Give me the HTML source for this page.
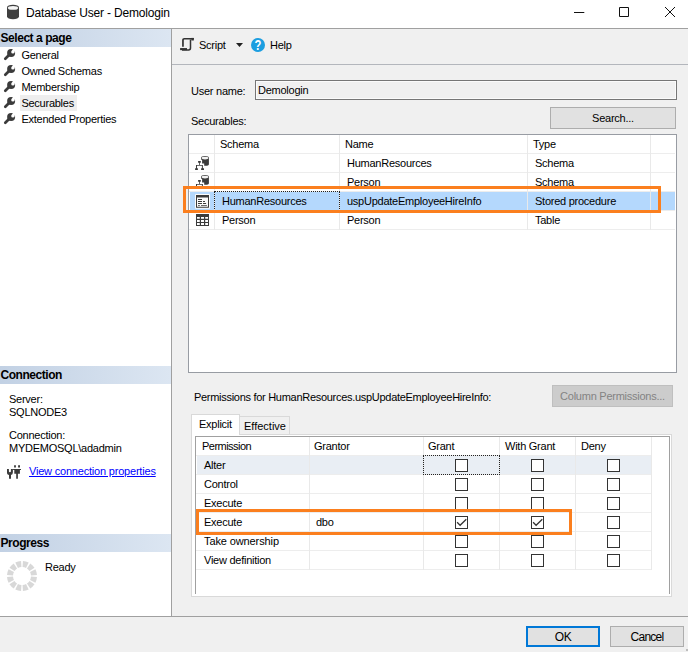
<!DOCTYPE html>
<html>
<head>
<meta charset="utf-8">
<title>Database User - Demologin</title>
<style>
html,body{margin:0;padding:0;}
body{width:688px;height:652px;position:relative;overflow:hidden;background:#f0f0f0;font-family:"Liberation Sans",sans-serif;font-size:11px;color:#000;letter-spacing:-0.25px;}
.a{position:absolute;white-space:nowrap;}
.t{position:absolute;white-space:nowrap;line-height:13px;height:13px;}
#titlebar{position:absolute;left:0;top:0;width:688px;height:28px;background:#fff;}
#title{left:26px;top:6px;font-size:12px;line-height:15px;letter-spacing:-0.17px;}
#topline{position:absolute;left:0;top:28px;width:688px;height:1px;background:#a0a0a0;}
#left{position:absolute;left:0;top:29px;width:171px;height:587px;background:#fff;}
.hdr{position:absolute;left:0;width:171px;height:18px;background:linear-gradient(to right,#c2d1e4,#dce6f2);font-weight:bold;font-size:12px;line-height:19px;letter-spacing:-0.45px;}
.hdr span{position:absolute;left:0.5px;top:0;}
.wr{position:absolute;left:4px;width:11px;height:11px;}
#vline{position:absolute;left:171px;top:29px;width:1px;height:587px;background:#a0a0a0;}
#tbline{position:absolute;left:172px;top:64px;width:516px;height:1px;background:#b3b6bc;}
#botline{position:absolute;left:0;top:616px;width:688px;height:1px;background:#a0a0a0;}
.btn{position:absolute;box-sizing:border-box;border:1px solid #adadad;background:#e1e1e1;text-align:center;line-height:19px;}
.grid{position:absolute;background:#fff;box-sizing:border-box;}
.hl{position:absolute;height:1px;background:#ededed;}
.vl{position:absolute;width:1px;background:#e9e9e9;}
.cb{position:absolute;width:13px;height:13px;box-sizing:border-box;border:1px solid #333;background:#fff;}
.or{position:absolute;box-sizing:border-box;border:3px solid #fb7f1e;}
</style>
</head>
<body>
<div id="titlebar">
<svg class="a" style="left:0px;top:0px" width="26" height="26" viewBox="0 0 26 26"><path d="M7 7.4 A6 2.6 0 0 1 19 7.4 V16.6 A6 2.6 0 0 1 7 16.6 Z" fill="#3f3f3f"/><ellipse cx="13" cy="7.9" rx="5.1" ry="1.85" fill="#f4f4f4"/></svg>
<div class="a" id="title">Database User - Demologin</div>
<svg class="a" style="left:570px;top:0" width="118" height="28" viewBox="0 0 118 28"><path d="M4 12.5 H14.3 M49.5 7.5 H58.5 V16.5 H49.5 Z M95 7 L105 17 M105 7 L95 17" stroke="#111" stroke-width="1" fill="none"/></svg>
</div>
<div id="topline"></div>
<div id="left">
<div class="hdr" style="top:0"><span>Select a page</span></div>
<div class="hdr" style="top:337px"><span>Connection</span></div>
<div class="hdr" style="top:505px"><span>Progress</span></div>
</div>
<div id="vline"></div>
<svg class="a" style="left:3px;top:48px" width="13" height="13" viewBox="0 0 13 13"><path d="M2.3 10.7 L7 6" stroke="#3b3b3b" stroke-width="2.7" stroke-linecap="round" fill="none"/><circle cx="8.1" cy="4.9" r="4" fill="#3b3b3b"/><circle cx="9.9" cy="3.9" r="1.7" fill="#fff"/><path d="M9.9 3.9 L12.1 -0.2" stroke="#fff" stroke-width="2.7" fill="none"/></svg>
<div class="t" style="left:21.4px;top:49px">General</div>
<svg class="a" style="left:3px;top:64px" width="13" height="13" viewBox="0 0 13 13"><path d="M2.3 10.7 L7 6" stroke="#3b3b3b" stroke-width="2.7" stroke-linecap="round" fill="none"/><circle cx="8.1" cy="4.9" r="4" fill="#3b3b3b"/><circle cx="9.9" cy="3.9" r="1.7" fill="#fff"/><path d="M9.9 3.9 L12.1 -0.2" stroke="#fff" stroke-width="2.7" fill="none"/></svg>
<div class="t" style="left:21.4px;top:65px">Owned Schemas</div>
<svg class="a" style="left:3px;top:80px" width="13" height="13" viewBox="0 0 13 13"><path d="M2.3 10.7 L7 6" stroke="#3b3b3b" stroke-width="2.7" stroke-linecap="round" fill="none"/><circle cx="8.1" cy="4.9" r="4" fill="#3b3b3b"/><circle cx="9.9" cy="3.9" r="1.7" fill="#fff"/><path d="M9.9 3.9 L12.1 -0.2" stroke="#fff" stroke-width="2.7" fill="none"/></svg>
<div class="t" style="left:21.4px;top:81px">Membership</div>
<svg class="a" style="left:3px;top:96px" width="13" height="13" viewBox="0 0 13 13"><path d="M2.3 10.7 L7 6" stroke="#3b3b3b" stroke-width="2.7" stroke-linecap="round" fill="none"/><circle cx="8.1" cy="4.9" r="4" fill="#3b3b3b"/><circle cx="9.9" cy="3.9" r="1.7" fill="#fff"/><path d="M9.9 3.9 L12.1 -0.2" stroke="#fff" stroke-width="2.7" fill="none"/></svg>
<div class="a" style="left:20px;top:95px;width:57px;height:16px;background:#eeeeee"></div>
<div class="t" style="left:21.4px;top:97px">Securables</div>
<svg class="a" style="left:3px;top:112px" width="13" height="13" viewBox="0 0 13 13"><path d="M2.3 10.7 L7 6" stroke="#3b3b3b" stroke-width="2.7" stroke-linecap="round" fill="none"/><circle cx="8.1" cy="4.9" r="4" fill="#3b3b3b"/><circle cx="9.9" cy="3.9" r="1.7" fill="#fff"/><path d="M9.9 3.9 L12.1 -0.2" stroke="#fff" stroke-width="2.7" fill="none"/></svg>
<div class="t" style="left:21.4px;top:113px">Extended Properties</div>
<div class="t" style="left:9px;top:393px">Server:</div>
<div class="t" style="left:9px;top:406px">SQLNODE3</div>
<div class="t" style="left:9px;top:429px">Connection:</div>
<div class="t" style="left:9px;top:442px">MYDEMOSQL\adadmin</div>
<svg class="a" style="left:7px;top:465px" width="15" height="15" viewBox="0 0 15 15"><path d="M-0.1 4 H1.9 V6.3 Q1.9 7.3 2.9 7.3 Q3.9 7.3 3.9 6.3 V4 H5.9 V7.2 Q5.9 9.6 4 10 V13.8 H2 V10 Q-0.1 9.6 -0.1 7.2 Z" fill="#3b3b3b"/><path d="M7.1 0.2 H8.9 V2.6 H7.1 Z M11.1 0.2 H13 V2.6 H11.1 Z M6.1 4.1 H14 V4.9 H12.9 V8.7 H10.9 V13.7 H9.2 V8.7 H7.3 V4.9 H6.1 Z" fill="#3b3b3b"/></svg>
<div class="t" style="left:29px;top:465px;color:#0000ff;text-decoration:underline;letter-spacing:-0.2px">View connection properties</div>
<svg class="a" style="left:7px;top:561px" width="30" height="30" viewBox="0 0 30 30"><path d="M29.97 15.92 A15 15 0 0 1 28.42 21.69 L23.05 19.02 A9 9 0 0 0 23.98 15.55 Z M27.51 23.28 A15 15 0 0 1 23.28 27.51 L19.97 22.50 A9 9 0 0 0 22.50 19.97 Z M21.69 28.42 A15 15 0 0 1 15.92 29.97 L15.55 23.98 A9 9 0 0 0 19.02 23.05 Z M14.08 29.97 A15 15 0 0 1 8.31 28.42 L10.98 23.05 A9 9 0 0 0 14.45 23.98 Z M6.72 27.51 A15 15 0 0 1 2.49 23.28 L7.50 19.97 A9 9 0 0 0 10.03 22.50 Z M1.58 21.69 A15 15 0 0 1 0.03 15.92 L6.02 15.55 A9 9 0 0 0 6.95 19.02 Z M0.03 14.08 A15 15 0 0 1 1.58 8.31 L6.95 10.98 A9 9 0 0 0 6.02 14.45 Z M2.49 6.72 A15 15 0 0 1 6.72 2.49 L10.03 7.50 A9 9 0 0 0 7.50 10.03 Z M8.31 1.58 A15 15 0 0 1 14.08 0.03 L14.45 6.02 A9 9 0 0 0 10.98 6.95 Z M15.92 0.03 A15 15 0 0 1 21.69 1.58 L19.02 6.95 A9 9 0 0 0 15.55 6.02 Z M23.28 2.49 A15 15 0 0 1 27.51 6.72 L22.50 10.03 A9 9 0 0 0 19.97 7.50 Z M28.42 8.31 A15 15 0 0 1 29.97 14.08 L23.98 14.45 A9 9 0 0 0 23.05 10.98 Z" fill="#d8d8d8"/></svg>
<div class="t" style="left:45px;top:561px">Ready</div>
<svg class="a" style="left:179px;top:37px" width="16" height="15" viewBox="0 0 16 15"><g stroke="#333" fill="none"><path d="M3.95 9.8 V3.2 Q3.95 1.75 5.4 1.75 H14.8" stroke-width="1.7"/><path d="M11.5 2.5 V11 Q11.5 12.9 9.6 12.9 H3" stroke-width="1.5"/><path d="M1.1 12.1 H8" stroke-width="2.1"/></g><path d="M12.4 0.9 H14.8 V3.5 H12.4 Z" fill="#333"/></svg>
<div class="t" style="left:199px;top:39px">Script</div>
<svg class="a" style="left:236px;top:43px" width="8" height="5" viewBox="0 0 8 5"><path d="M0 0 H7 L3.5 4 Z" fill="#222"/></svg>
<svg class="a" style="left:251px;top:38px" width="14" height="14" viewBox="0 0 14 14"><circle cx="7" cy="7" r="7" fill="#1c9ee0"/><text transform="translate(6.9,12.1) scale(0.8,1)" x="0" y="0" font-family="Liberation Sans, sans-serif" font-size="14" font-weight="bold" fill="#fff" text-anchor="middle" letter-spacing="0">?</text></svg>
<div class="t" style="left:270px;top:39px">Help</div>
<div id="tbline"></div>
<div class="t" style="left:191px;top:85px">User name:</div>
<div class="a" style="left:255px;top:80px;width:420px;height:18px;border:1px solid #767676;background:#f0f0f0;box-shadow:inset 0 0 0 1px #fbfbfb"></div>
<div class="t" style="left:258px;top:84px">Demologin</div>
<div class="t" style="left:191px;top:115px">Securables:</div>
<div class="btn" style="left:550px;top:107px;width:126px;height:22px;line-height:21px">Search...</div>
<div class="grid" style="left:188px;top:134px;width:489px;height:239px;border:1px solid #989ca3;"></div>
<div class="a" style="left:190px;top:192px;width:485px;height:18px;background:#b4d8fd"></div>
<div class="hl" style="left:189px;top:153px;width:486px"></div>
<div class="hl" style="left:189px;top:172px;width:486px"></div>
<div class="hl" style="left:189px;top:191px;width:486px"></div>
<div class="hl" style="left:189px;top:210px;width:486px"></div>
<div class="hl" style="left:189px;top:229px;width:486px"></div>
<div class="vl" style="left:214px;top:135px;height:95px"></div>
<div class="vl" style="left:339px;top:135px;height:95px"></div>
<div class="vl" style="left:527px;top:135px;height:95px"></div>
<div class="vl" style="left:650px;top:135px;height:95px"></div>
<div class="a" style="left:214px;top:191px;width:124px;height:18px;border:1px dotted #222"></div>
<div class="t" style="left:220px;top:138px">Schema</div>
<div class="t" style="left:345px;top:138px">Name</div>
<div class="t" style="left:533px;top:138px">Type</div>
<div class="t" style="left:347px;top:157px">HumanResources</div>
<div class="t" style="left:535px;top:157px">Schema</div>
<div class="t" style="left:347px;top:176px">Person</div>
<div class="t" style="left:535px;top:176px">Schema</div>
<div class="t" style="left:222px;top:195px">HumanResources</div>
<div class="t" style="left:347px;top:195px">uspUpdateEmployeeHireInfo</div>
<div class="t" style="left:535px;top:195px">Stored procedure</div>
<div class="t" style="left:222px;top:214px">Person</div>
<div class="t" style="left:347px;top:214px">Person</div>
<div class="t" style="left:535px;top:214px">Table</div>
<svg class="a" style="left:195px;top:156px" width="15" height="15" viewBox="0 0 15 15"><path d="M6.1 1.7 A3.9 1.7 0 0 1 13.9 1.7 V8.2 A3.9 1.6 0 0 1 6.1 8.2 Z" fill="#3b3b3b"/><ellipse cx="10" cy="2.1" rx="3.4" ry="1.3" fill="#f2f2f2"/><path d="M5.5 3.8 H7.1 V7.4 H9.2 V11 H5.5 Z" fill="#fff"/><path d="M3.1 5.1 H5.8 V6.8 H4.9 V9 H7.85 V12.2 H9 V14 H6.1 V12.2 H6.9 V9.8 H2 V12.2 H2.9 V14 H0.1 V12.2 H1 V9 H4.1 V6.8 H3.1 Z" fill="#3b3b3b"/></svg>
<svg class="a" style="left:195px;top:175px" width="15" height="15" viewBox="0 0 15 15"><path d="M6.1 1.7 A3.9 1.7 0 0 1 13.9 1.7 V8.2 A3.9 1.6 0 0 1 6.1 8.2 Z" fill="#3b3b3b"/><ellipse cx="10" cy="2.1" rx="3.4" ry="1.3" fill="#f2f2f2"/><path d="M5.5 3.8 H7.1 V7.4 H9.2 V11 H5.5 Z" fill="#fff"/><path d="M3.1 5.1 H5.8 V6.8 H4.9 V9 H7.85 V12.2 H9 V14 H6.1 V12.2 H6.9 V9.8 H2 V12.2 H2.9 V14 H0.1 V12.2 H1 V9 H4.1 V6.8 H3.1 Z" fill="#3b3b3b"/></svg>
<svg class="a" style="left:195px;top:194px" width="15" height="15" viewBox="0 0 15 15"><rect x="0" y="0" width="15" height="14.8" rx="1" fill="#fbfbfb"/><path d="M1 1 H14 V13.8 H1 Z M2 3.4 V12.8 H13 V3.4 Z" fill="#3b3b3b" fill-rule="evenodd"/><path d="M3 5.1 H7 V6 H3 Z M3 7.05 H7 V7.95 H3 Z M8 7.05 H10 V7.95 H8 Z M3 9 H7 V9.9 H3 Z M8 9 H11.1 V9.9 H8 Z M3 10.9 H4.9 V11.8 H3 Z M6 10.9 H11.9 V11.8 H6 Z" fill="#3b3b3b"/></svg>
<svg class="a" style="left:196px;top:214px" width="13" height="12" viewBox="0 0 13 12"><path d="M0 0 H13 V12 H0 Z" fill="#3b3b3b"/><path d="M1 3 H3.8 V4.8 H1 Z M5 3 H8 V4.8 H5 Z M9.2 3 H12 V4.8 H9.2 Z M1 5.9 H3.8 V7.9 H1 Z M5 5.9 H8 V7.9 H5 Z M9.2 5.9 H12 V7.9 H9.2 Z M1 9.1 H3.8 V11 H1 Z M5 9.1 H8 V11 H5 Z M9.2 9.1 H12 V11 H9.2 Z" fill="#fff"/></svg>
<div class="or" style="left:183px;top:186px;width:478px;height:27px"></div>
<div class="t" style="left:194px;top:391px;letter-spacing:-0.29px">Permissions for HumanResources.uspUpdateEmployeeHireInfo:</div>
<div class="btn" style="left:552px;top:385px;width:121px;height:22px;color:#838383;background:#cccccc;border-color:#bfbfbf;line-height:21px">Column Permissions...</div>
<div class="a" style="left:239px;top:416px;width:51px;height:19px;box-sizing:border-box;border:1px solid #d9d9d9;background:#f0f0f0"></div>
<div class="grid" style="left:191px;top:434px;width:481px;height:163px;border:1px solid #d9d9d9;"></div>
<div class="a" style="left:191px;top:414px;width:49px;height:21px;box-sizing:border-box;border:1px solid #d9d9d9;border-bottom:none;background:#fff"></div>
<div class="t" style="left:199px;top:418px">Explicit</div>
<div class="t" style="left:244px;top:420px;letter-spacing:0">Effective</div>
<div class="grid" style="left:195px;top:436px;width:475px;height:158px;border:1px solid #a0a0a0;border-bottom:none"></div>
<div class="a" style="left:197px;top:456px;width:455px;height:18px;background:#e9eef4"></div>
<div class="hl" style="left:196px;top:455px;width:456px"></div>
<div class="hl" style="left:196px;top:474px;width:456px"></div>
<div class="hl" style="left:196px;top:493px;width:456px"></div>
<div class="hl" style="left:196px;top:512px;width:456px"></div>
<div class="hl" style="left:196px;top:531px;width:456px"></div>
<div class="hl" style="left:196px;top:550px;width:456px"></div>
<div class="hl" style="left:196px;top:569px;width:456px"></div>
<div class="vl" style="left:309px;top:437px;height:133px"></div>
<div class="vl" style="left:423px;top:437px;height:133px"></div>
<div class="vl" style="left:499px;top:437px;height:133px"></div>
<div class="vl" style="left:575px;top:437px;height:133px"></div>
<div class="vl" style="left:651px;top:437px;height:133px"></div>
<div class="t" style="left:202px;top:440px;letter-spacing:-0.52px">Permission</div>
<div class="t" style="left:314px;top:440px">Grantor</div>
<div class="t" style="left:428px;top:440px">Grant</div>
<div class="t" style="left:505px;top:440px">With Grant</div>
<div class="t" style="left:581px;top:440px">Deny</div>
<div class="t" style="left:204px;top:459px">Alter</div>
<div class="cb" style="left:455px;top:459px"></div>
<div class="cb" style="left:531px;top:459px"></div>
<div class="cb" style="left:607px;top:459px"></div>
<div class="t" style="left:204px;top:478px">Control</div>
<div class="cb" style="left:455px;top:478px"></div>
<div class="cb" style="left:531px;top:478px"></div>
<div class="cb" style="left:607px;top:478px"></div>
<div class="t" style="left:204px;top:497px">Execute</div>
<div class="cb" style="left:455px;top:497px"></div>
<div class="cb" style="left:531px;top:497px"></div>
<div class="cb" style="left:607px;top:497px"></div>
<div class="t" style="left:204px;top:516px">Execute</div>
<div class="t" style="left:316px;top:516px">dbo</div>
<div class="cb" style="left:455px;top:516px"></div>
<svg class="a" style="left:455px;top:516px" width="13" height="13" viewBox="0 0 13 13"><path d="M2.1 6.2 L5.1 9.3 L11.3 3.2" stroke="#333" stroke-width="1.25" fill="none"/></svg>
<div class="cb" style="left:531px;top:516px"></div>
<svg class="a" style="left:531px;top:516px" width="13" height="13" viewBox="0 0 13 13"><path d="M2.1 6.2 L5.1 9.3 L11.3 3.2" stroke="#333" stroke-width="1.25" fill="none"/></svg>
<div class="cb" style="left:607px;top:516px"></div>
<div class="t" style="left:204px;top:535px;letter-spacing:-0.11px">Take ownership</div>
<div class="cb" style="left:455px;top:535px"></div>
<div class="cb" style="left:531px;top:535px"></div>
<div class="cb" style="left:607px;top:535px"></div>
<div class="t" style="left:204px;top:554px">View definition</div>
<div class="cb" style="left:455px;top:554px"></div>
<div class="cb" style="left:531px;top:554px"></div>
<div class="cb" style="left:607px;top:554px"></div>
<div class="a" style="left:423px;top:455px;width:75px;height:18px;border:1px dotted #222"></div>
<div class="or" style="left:196px;top:509px;width:376px;height:26px"></div>
<div id="botline"></div>
<div class="a" style="left:686px;top:649px;width:2px;height:2px;background:#bdbdbd"></div>
<div class="btn" style="left:526px;top:626px;width:74px;height:21px;border:2px solid #0078d7;line-height:18px;font-size:12px;letter-spacing:-0.5px">OK</div>
<div class="btn" style="left:610px;top:626px;width:74px;height:21px;line-height:20px;font-size:12px;letter-spacing:-0.75px">Cancel</div>
</body>
</html>
